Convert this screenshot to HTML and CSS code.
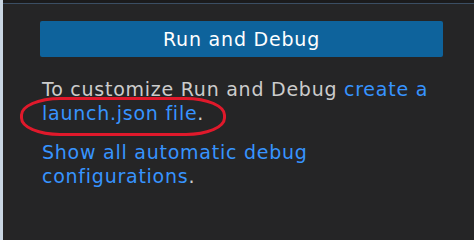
FILE: index.html
```html
<!DOCTYPE html>
<html>
<head>
<meta charset="utf-8">
<link rel="stylesheet" href="styles.css">
</head>
<body>
<div class="frame">
  <div class="topbar"></div>
  <div class="panel">
    <button class="run-btn">Run and Debug</button>
    <p class="para">To customize Run and Debug <a class="link">create a</a><br><span class="hl"><a class="link">launch.json file</a>.</span></p>
    <p class="para"><a class="link">Show all automatic debug<br>configurations</a>.</p>
  </div>
</div>
</body>
</html>
```

FILE: styles.css
```css
html, body {
  margin: 0;
  padding: 0;
  background: #252526;
}
.frame {
  width: 474px;
  min-height: 100vh;
  border-left: 3px solid #c9d6e3;
  box-sizing: border-box;
  overflow: hidden;
  font-family: "DejaVu Sans", "Noto Sans", sans-serif;
}
.topbar {
  height: 3px;
  background: #1b1b1c;
  border-bottom: 1px solid #3b4e63;
}
.panel {
  padding: 17px 28px 0 37px;
}
.run-btn {
  display: block;
  width: 403px;
  height: 36px;
  border: none;
  border-radius: 2px;
  background: #0e639c;
  color: #ffffff;
  font-family: inherit;
  font-size: 19px;
  letter-spacing: 0.8px;
  padding: 0;
  margin: 0;
}
.para {
  margin: 20px 0 0 2px;
  color: #cccccc;
  font-size: 19px;
  letter-spacing: 0.75px;
  line-height: 24px;
  white-space: nowrap;
}
.para + .para {
  margin-top: 15px;
}
.link {
  color: #3794ff;
  text-decoration: none;
}
.hl {
  position: relative;
  display: inline-block;
}
.hl::after {
  content: "";
  position: absolute;
  left: -22px;
  right: -22px;
  top: -4px;
  bottom: -11px;
  border: 3px solid #e0192b;
  border-radius: 40px / 18px;
}
```
